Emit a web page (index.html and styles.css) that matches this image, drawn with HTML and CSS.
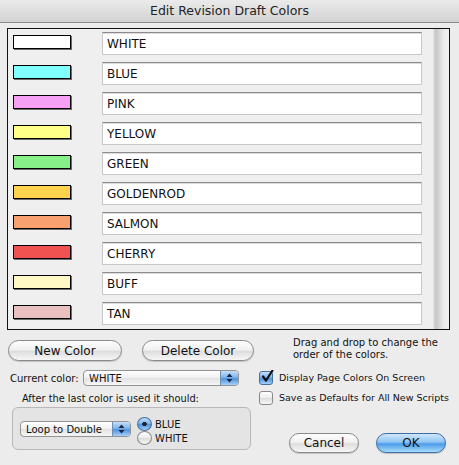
FILE: index.html
```html
<!DOCTYPE html>
<html>
<head>
  <meta charset="UTF-8">
  <title>Edit Revision Draft Colors</title>
  <link rel="stylesheet" href="styles.css">
</head>
<body>
  <div class="titlebar">Edit Revision Draft Colors</div>

  <div class="color-list">
    <div class="rows">
      <div class="row"><span class="swatch sw-white"></span><div class="name-field">WHITE</div></div>
      <div class="row"><span class="swatch sw-blue"></span><div class="name-field">BLUE</div></div>
      <div class="row"><span class="swatch sw-pink"></span><div class="name-field">PINK</div></div>
      <div class="row"><span class="swatch sw-yellow"></span><div class="name-field">YELLOW</div></div>
      <div class="row"><span class="swatch sw-green"></span><div class="name-field">GREEN</div></div>
      <div class="row"><span class="swatch sw-goldenrod"></span><div class="name-field">GOLDENROD</div></div>
      <div class="row"><span class="swatch sw-salmon"></span><div class="name-field">SALMON</div></div>
      <div class="row"><span class="swatch sw-cherry"></span><div class="name-field">CHERRY</div></div>
      <div class="row"><span class="swatch sw-buff"></span><div class="name-field">BUFF</div></div>
      <div class="row"><span class="swatch sw-tan"></span><div class="name-field">TAN</div></div>
    </div>
    <div class="scroll-track"></div>
  </div>

  <div class="bottom">
    <div class="left-col">
      <div class="btn-row">
        <button class="aqua-btn new-btn">New Color</button>
        <button class="aqua-btn delete-btn">Delete Color</button>
      </div>
      <div class="current-row">
        <span class="small-label">Current color:</span>
        <div class="popup current-popup">
          <span class="popup-text">WHITE</span>
          <span class="popup-arrows">
            <svg width="7" height="10" viewBox="0 0 7 10"><path d="M3.5 0.5 L6.5 4 L0.5 4 Z M0.5 6 L6.5 6 L3.5 9.5 Z" fill="#1a2a40"/></svg>
          </span>
        </div>
      </div>
      <div class="after-label">After the last color is used it should:</div>
      <div class="group">
        <div class="popup loop-popup">
          <span class="popup-text">Loop to Double</span>
          <span class="popup-arrows">
            <svg width="7" height="10" viewBox="0 0 7 10"><path d="M3.5 0.5 L6.5 4 L0.5 4 Z M0.5 6 L6.5 6 L3.5 9.5 Z" fill="#1a2a40"/></svg>
          </span>
        </div>
        <div class="radios">
          <div class="radio-row"><span class="radio on"></span>BLUE</div>
          <div class="radio-row"><span class="radio"></span>WHITE</div>
        </div>
      </div>
    </div>

    <div class="right-col">
      <div class="hint">Drag and drop to change the<br>order of the colors.</div>
      <div class="check-row first">
        <span class="checkbox on">
          <svg width="14" height="14" viewBox="0 0 14 14"><path d="M3 6.5 L6 10.5 L12.5 0.5" fill="none" stroke="#111" stroke-width="2.2" stroke-linecap="round" stroke-linejoin="round"/></svg>
        </span>
        Display Page Colors On Screen
      </div>
      <div class="check-row">
        <span class="checkbox"></span>
        Save as Defaults for All New Scripts
      </div>
      <div class="dialog-btns">
        <button class="aqua-btn cancel-btn">Cancel</button>
        <button class="aqua-btn ok-btn">OK</button>
      </div>
    </div>
  </div>
</body>
</html>
```

FILE: styles.css
```css
body {
  margin: 0;
  width: 459px;
  height: 465px;
  overflow: hidden;
  background: #ececec;
  font-family: 'DejaVu Sans', sans-serif;
  color: #111;
}
.titlebar {
  height: 22px;
  line-height: 22px;
  text-align: center;
  font-size: 12.5px;
  color: #222;
  background: linear-gradient(#ebebeb, #d2d2d2);
  border-bottom: 1px solid #8a8a8a;
}

/* color list */
.color-list {
  display: flex;
  width: 441px;
  margin: 5px 0 0 7px;
  border: 1px solid #111;
  background: #efefef;
}
.rows {
  flex: 1;
  padding: 3px 0 4px;
}
.row {
  display: flex;
  align-items: center;
  height: 23px;
  margin-bottom: 7px;
}
.row:last-child {
  margin-bottom: 0;
}
.swatch {
  width: 56px;
  height: 12px;
  margin: -3px 0 0 5px;
  border: 1px solid #000;
  box-shadow: 1px 1px 0 #6a6a6a;
}
.sw-white { background: #ffffff; }
.sw-blue { background: #80ffff; }
.sw-pink { background: #f5a0f5; }
.sw-yellow { background: #ffff88; }
.sw-green { background: #88f088; }
.sw-goldenrod { background: #ffd34e; }
.sw-salmon { background: #f8a070; }
.sw-cherry { background: #f05252; }
.sw-buff { background: #fff8c4; }
.sw-tan { background: #e8c0c0; }
.name-field {
  box-sizing: border-box;
  width: 320px;
  height: 23px;
  margin-left: 31px;
  padding-left: 4px;
  line-height: 22px;
  font-size: 12px;
  background: #fff;
  border: 1px solid #c8c8c8;
  border-top-color: #8c8c8c;
  box-shadow: inset 0 1px 0 #dcdcdc;
}
.scroll-track {
  width: 16px;
  background: linear-gradient(90deg, #e2e2e2 0, #c6c6c6 3px, #d4d4d4 6px, #e8e8e8 10px, #f2f2f2 16px);
}

/* lower part */
.bottom {
  display: flex;
  padding-left: 8px;
}
.left-col {
  width: 246px;
}
.right-col {
  flex: 1;
  margin-left: 5px;
}
.aqua-btn {
  height: 21px;
  padding: 0;
  font-family: inherit;
  font-size: 12px;
  color: #111;
  border: 1px solid #8a8a8a;
  border-radius: 11px;
  background: linear-gradient(#fdfdfd 0%, #f1f1f1 45%, #dedede 55%, #f6f6f6 100%);
  box-shadow: 0 1px 1px rgba(0,0,0,0.18);
}
.btn-row {
  display: flex;
  gap: 20px;
  margin-top: 10px;
}
.new-btn { width: 114px; }
.delete-btn { width: 112px; }
.current-row {
  display: flex;
  align-items: center;
  margin-top: 9px;
}
.small-label {
  margin-left: 2px;
  font-size: 10px;
}
.popup {
  box-sizing: border-box;
  display: flex;
  align-items: center;
  height: 16px;
  border: 1px solid #939393;
  border-radius: 4px;
  background: linear-gradient(#ffffff, #f0f0f0 50%, #e2e2e2 51%, #f6f6f6);
  font-size: 10px;
  overflow: hidden;
}
.popup-text {
  flex: 1;
  padding-left: 5px;
}
.popup-arrows {
  display: flex;
  align-items: center;
  justify-content: center;
  width: 17px;
  align-self: stretch;
  border-left: 1px solid #6f8fb5;
  background: linear-gradient(#c4def8, #7fb5ee 45%, #4e92df 55%, #a6d0f8);
}
.current-popup {
  width: 156px;
  margin: 0 15px 0 auto;
}
.after-label {
  margin: 7px 0 0 14px;
  font-size: 9.8px;
  line-height: 12px;
}
.group {
  box-sizing: border-box;
  display: flex;
  width: 239px;
  height: 43px;
  margin: 2px 0 0 4px;
  padding: 13px 0 0 7px;
  border: 1px solid #b8b8b8;
  border-radius: 6px;
  background: #e4e4e4;
}
.loop-popup {
  width: 111px;
}
.radios {
  margin: -4px 0 0 6px;
}
.radio-row {
  display: flex;
  align-items: center;
  height: 14px;
  font-size: 10px;
}
.radio {
  box-sizing: border-box;
  width: 15px;
  height: 14px;
  margin-right: 3px;
  border: 1px solid #8a8a8a;
  border-radius: 50%;
  background: linear-gradient(#ffffff, #ececec 50%, #dcdcdc 51%, #f8f8f8);
}
.radio.on {
  border-color: #46709e;
  background: radial-gradient(circle, #1c2530 0, #1c2530 2px, transparent 2.5px),
              linear-gradient(#c4def8, #7fb5ee 45%, #4e92df 55%, #a6d0f8);
}
.hint {
  margin: 7px 0 0 34px;
  font-size: 10px;
  line-height: 12px;
}
.check-row {
  display: flex;
  align-items: center;
  height: 15px;
  margin-top: 5px;
  font-size: 9.5px;
}
.check-row.first {
  margin-top: 9px;
}
.checkbox {
  box-sizing: border-box;
  width: 14px;
  height: 14px;
  margin-right: 6px;
  border: 1px solid #8a8a8a;
  border-radius: 3px;
  background: linear-gradient(#ffffff, #ececec 50%, #dcdcdc 51%, #f8f8f8);
}
.checkbox svg {
  display: block;
  margin-top: -2px;
}
.checkbox.on {
  border-color: #46709e;
  background: linear-gradient(#c4def8, #7fb5ee 45%, #4e92df 55%, #a6d0f8);
}
.dialog-btns {
  display: flex;
  gap: 17px;
  margin: 28px 0 0 30px;
}
.cancel-btn { width: 70px; height: 20px; }
.ok-btn {
  width: 70px;
  height: 20px;
  border-color: #3d6da6;
  background: linear-gradient(#d2e8fc 0%, #8fc4f4 45%, #4b9ce8 55%, #a8dcfc 100%);
}
```
